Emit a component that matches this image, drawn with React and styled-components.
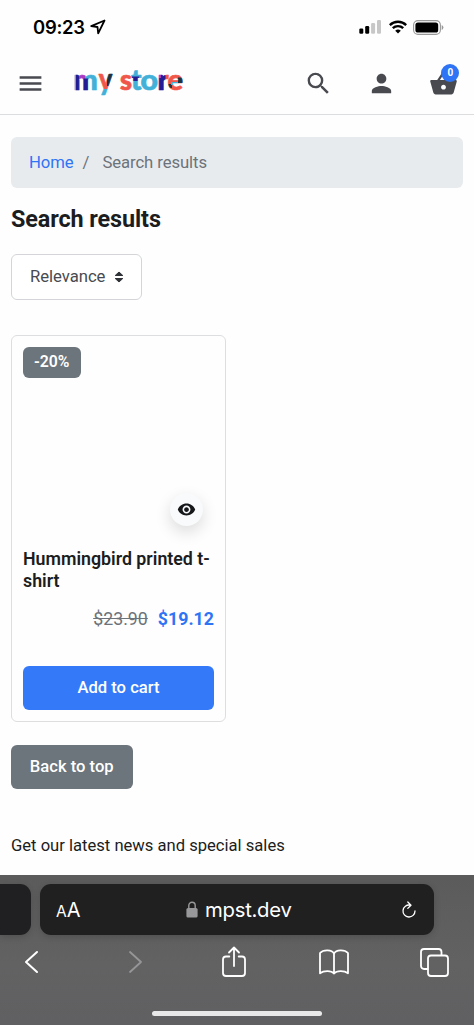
import React from 'react';
import styled, { createGlobalStyle } from 'styled-components';
import { MdMenu, MdSearch, MdPerson, MdShoppingBasket, MdRemoveRedEye } from 'react-icons/md';

const GlobalStyle = createGlobalStyle`
  *, *::before, *::after { box-sizing: border-box; }
  body { margin: 0; background: #fefefe; font-family: Roboto, "Liberation Sans", sans-serif; color: #1b1d20; }
  button { font-family: inherit; margin: 0; padding: 0; border: 0; background: none; color: inherit; }
  svg { display: block; flex: none; }
`;

const Screen = styled.div`
  width: 474px;
  height: 1025px;
  display: flex;
  flex-direction: column;
  overflow: hidden;
`;

const StatusBar = styled.div`
  height: 52px;
  flex: none;
  display: flex;
  justify-content: space-between;
  padding: 15px 30px 0 33px;
`;

const Clock = styled.div`
  display: flex;
  align-items: center;
  gap: 5px;
  height: 24px;
  font: 600 18.4px/24px Inter, sans-serif;
  letter-spacing: -0.25px;
  color: #000;
`;

const StatusIcons = styled.div`
  display: flex;
  align-items: center;
  gap: 6.5px;
  height: 24px;
`;

const Header = styled.header`
  height: 63px;
  flex: none;
  display: flex;
  align-items: center;
  padding: 0 0 0 16.4px;
  border-bottom: 1px solid #dcdddf;
  color: #484a50;
`;

const IconButton = styled.button`
  position: relative;
  display: flex;
  flex: none;
  width: 29px;
  height: 29px;
  margin-left: ${(p) => p.$gap || '0'};
`;

const Logo = styled.svg`
  margin-left: 19.6px;
  font-family: Lato, sans-serif;
  font-weight: 900;
`;

const CartCount = styled.span`
  position: absolute;
  left: 12.5px;
  top: -4.5px;
  width: 18px;
  height: 18px;
  border-radius: 50%;
  background: #2f74f5;
  color: #fff;
  font-size: 10px;
  font-weight: 700;
  line-height: 18px;
  text-align: center;
`;

const Main = styled.main`
  flex: 1;
  display: flex;
  flex-direction: column;
  align-items: flex-start;
  padding: 22px 11px 0;
`;

const Breadcrumb = styled.nav`
  align-self: stretch;
  height: 51px;
  display: flex;
  align-items: center;
  padding: 0 18px 1px;
  border-radius: 6px;
  background: #e8ebee;
  color: #6c737a;
  font-size: 16.7px;
  letter-spacing: -0.08px;
`;

const Crumb = styled.span`
  color: ${(p) => (p.$link ? '#2f74f5' : 'inherit')};
  margin-right: ${(p) => p.$space || '0'};
`;

const Heading = styled.h1`
  margin: 17px 0 0;
  font-size: 23.4px;
  line-height: 28px;
  font-weight: 700;
  letter-spacing: -0.1px;
`;

const SortSelect = styled.button`
  display: flex;
  align-items: center;
  gap: 8.5px;
  width: 131px;
  height: 46px;
  margin-top: 21px;
  padding: 0 0 1px 18px;
  border: 1px solid #d3d5d8;
  border-radius: 6px;
  background: #fff;
  color: #484a50;
  font-size: 16.7px;
  letter-spacing: -0.04px;
`;

const Card = styled.article`
  width: 215px;
  height: 387.5px;
  margin-top: 34.5px;
  padding: 11px;
  display: flex;
  flex-direction: column;
  border: 1px solid #dddee0;
  border-radius: 6px;
`;

const Thumbnail = styled.div`
  height: 191px;
  display: flex;
  flex-direction: column;
  justify-content: space-between;
  align-items: flex-start;
  padding-bottom: 10px;
`;

const Discount = styled.span`
  width: 57.5px;
  height: 31px;
  border-radius: 6px;
  background: #6c747c;
  color: #fff;
  font-size: 15.8px;
  font-weight: 600;
  line-height: 30px;
  text-align: center;
`;

const QuickView = styled.button`
  align-self: flex-end;
  display: flex;
  align-items: center;
  justify-content: center;
  width: 33px;
  height: 33px;
  margin-right: 11.5px;
  border-radius: 50%;
  background: #f9fafb;
  color: #15171a;
  box-shadow: 0 6px 16px rgba(0, 0, 0, 0.14);
`;

const ProductName = styled.h2`
  margin: 12px -2px 0 0;
  font-size: 17.8px;
  line-height: 22px;
  font-weight: 600;
`;

const Prices = styled.div`
  display: flex;
  justify-content: flex-end;
  gap: 10px;
  margin-top: 15px;
  font-size: 17.8px;
  line-height: 24px;
`;

const OldPrice = styled.span`
  color: #6c737a;
  text-decoration: line-through;
`;

const Price = styled.span`
  color: #2f74f5;
  font-weight: 700;
`;

const Button = styled.button`
  width: ${(p) => p.$width};
  height: 44.5px;
  flex: none;
  margin-top: ${(p) => p.$top};
  border-radius: 6px;
  background: ${(p) => (p.$primary ? '#347af8' : '#6c747c')};
  color: #fff;
  font-size: 16.6px;
  font-weight: 500;
`;

const Newsletter = styled.p`
  margin: 44.5px 0 0;
  font-size: 16.6px;
  line-height: 24px;
  white-space: nowrap;
`;

const Browser = styled.footer`
  height: 150px;
  flex: none;
  display: flex;
  flex-direction: column;
  align-items: center;
  padding-top: 9px;
  background: linear-gradient(#5b5b5b, #626263 60%, #606062);
  color: #fff;
`;

const TabStrip = styled.div`
  align-self: stretch;
  display: flex;
  gap: 9px;
  height: 51px;
`;

const PreviousTab = styled.div`
  width: 31px;
  border-radius: 0 11px 11px 0;
  background: #202022;
  box-shadow: 0 2px 7px rgba(0, 0, 0, 0.16);
`;

const AddressBar = styled.div`
  width: 394px;
  display: flex;
  align-items: center;
  padding: 0 17px 0 16px;
  border-radius: 11px;
  background: #202021;
  box-shadow: 0 2px 7px rgba(0, 0, 0, 0.16);
  font-family: Inter, sans-serif;
  font-size: 20.3px;
`;

const TextSize = styled.span`
  display: flex;
  align-items: baseline;
  width: 130px;
  padding-top: 2px;
  line-height: 26px;
`;

const Letter = styled.span`
  font-size: ${(p) => p.$size};
`;

const Address = styled.span`
  flex: 1;
  margin-left: 7px;
  letter-spacing: -0.25px;
`;

const Toolbar = styled.div`
  align-self: stretch;
  display: flex;
  align-items: center;
  height: 54px;
  padding-left: 24px;
`;

const ToolButton = styled.button`
  display: flex;
  flex: none;
  margin-left: ${(p) => p.$gap || '0'};
  color: ${(p) => (p.disabled ? '#969698' : '#fff')};
`;

const HomeIndicator = styled.div`
  width: 170px;
  height: 5px;
  margin-top: 22px;
  border-radius: 3px;
  background: #e9e9e9;
`;

const SKY = '#43b0d8';
const NAVY = '#241c92';
const RED = '#f0574b';
const INK = '#20303c';
const PLUM = '#a83cc0';

/* Each letter has a base colour and overlapping blocks [x, y, width, height, colour]. */
const letters = [
  { ch: 'm', x: 8.2, w: 24.5, base: SKY, blocks: [[11, 13, 4.5, 20, NAVY], [14, 12, 6, 6.5, PLUM], [18.3, 17.5, 5, 14, NAVY]] },
  { ch: 'y', x: 33.8, w: 13.5, size: 30, base: RED, blocks: [[42, 12, 8, 13, INK], [30, 28, 20, 14, SKY]] },
  { ch: 's', x: 55, w: 12, base: RED, blocks: [] },
  { ch: 't', x: 66, w: 10.5, base: SKY, blocks: [[67, 15.5, 7.2, 4.5, NAVY]] },
  { ch: 'o', x: 75.5, w: 17.5, base: SKY, blocks: [] },
  { ch: 'r', x: 92.5, w: 11, base: NAVY, blocks: [[92, 12, 4, 5, PLUM], [100.5, 12, 6, 12, RED]] },
  { ch: 'e', x: 102.5, w: 15.5, base: RED, blocks: [[113, 16.5, 5, 5.5, INK], [102, 23, 5, 4, INK], [106, 21, 7, 3, SKY]] },
];

function StoreLogo() {
  return (
    <Logo width="125" height="45" viewBox="0 0 125 45" role="img" aria-label="my store">
      <defs>
        {letters.map((l) => (
          <pattern key={l.ch} id={`ink-${l.ch}`} patternUnits="userSpaceOnUse" width="125" height="45">
            <rect width="125" height="45" fill={l.base} />
            {l.blocks.map(([x, y, w, h, fill]) => (
              <rect key={`${x}-${y}`} x={x} y={y} width={w} height={h} fill={fill} />
            ))}
          </pattern>
        ))}
      </defs>
      {letters.map((l) => (
        <text
          key={l.ch}
          x={l.x}
          y="28.8"
          fontSize={l.size || 28}
          fill={`url(#ink-${l.ch})`}
          stroke={`url(#ink-${l.ch})`}
          strokeWidth="0.7"
          strokeLinejoin="round"
          textLength={l.w}
          lengthAdjust="spacingAndGlyphs"
        >
          {l.ch}
        </text>
      ))}
    </Logo>
  );
}

const line = { fill: 'none', stroke: 'currentColor', strokeLinecap: 'round', strokeLinejoin: 'round' };

export default function App() {
  return (
    <Screen>
      <GlobalStyle />
      <StatusBar>
        <Clock>
          09:23
          <svg width="16" height="16" viewBox="0 0 16 16" {...line} strokeWidth="1.8">
            <path d="M14.500 1.500 1.200 7.200 7.500 8 8.200 14.300Z" />
          </svg>
        </Clock>
        <StatusIcons>
          <svg width="23" height="14" viewBox="0 0 23 14">
            <rect x="0.3" y="8.6" width="4" height="5.1" rx="1.2" fill="#000" />
            <rect x="6.2" y="6" width="4" height="7.7" rx="1.2" fill="#000" />
            <rect x="12.1" y="3" width="4" height="10.7" rx="1.2" fill="#c7c7c7" />
            <rect x="18" y="0" width="4" height="13.7" rx="1.2" fill="#c7c7c7" />
          </svg>
          <svg width="18" height="14" viewBox="0 0 18 14" fill="none" stroke="#000" strokeWidth="2.4">
            <path d="M.8 5.1a11.8 11.8 0 0 1 16.4 0" />
            <path d="M3.8 8.2a7.5 7.5 0 0 1 10.4 0" />
            <path d="M9 13.6 6.2 10.8a4 4 0 0 1 5.6 0Z" fill="#000" stroke="none" />
          </svg>
          <svg width="31" height="15" viewBox="0 0 31 15">
            <rect x="0.6" y="0.6" width="26.8" height="13.8" rx="4.4" fill="none" stroke="#999" strokeWidth="1.1" />
            <rect x="2.4" y="2.4" width="22.8" height="10.2" rx="2.6" fill="#000" />
            <path d="M28.7 5v5q1.7-.8 1.7-2.5T28.7 5Z" fill="#999" />
          </svg>
        </StatusIcons>
      </StatusBar>

      <Header>
        <IconButton aria-label="Menu"><MdMenu size={29} /></IconButton>
        <StoreLogo />
        <IconButton $gap="114.5px" aria-label="Search"><MdSearch size={29} /></IconButton>
        <IconButton $gap="33.3px" aria-label="Account"><MdPerson size={29} /></IconButton>
        <IconButton $gap="33.2px" aria-label="Cart">
          <MdShoppingBasket size={29} />
          <CartCount>0</CartCount>
        </IconButton>
      </Header>

      <Main>
        <Breadcrumb>
          <Crumb $link $space="9px">Home</Crumb>
          <Crumb $space="13px">/</Crumb>
          <Crumb>Search results</Crumb>
        </Breadcrumb>
        <Heading>Search results</Heading>
        <SortSelect>
          Relevance
          <svg width="10" height="12" viewBox="0 0 10 12" fill="#303338" stroke="#303338" strokeWidth="1" strokeLinejoin="round">
            <path d="M1.2 4.5 5 1l3.8 3.5ZM1.2 7.5 5 11l3.8-3.5Z" />
          </svg>
        </SortSelect>

        <Card>
          <Thumbnail>
            <Discount>-20%</Discount>
            <QuickView aria-label="Quick view"><MdRemoveRedEye size={19} /></QuickView>
          </Thumbnail>
          <ProductName>Hummingbird printed t-shirt</ProductName>
          <Prices>
            <OldPrice>$23.90</OldPrice>
            <Price>$19.12</Price>
          </Prices>
          <Button $primary $width="100%" $top="35px">Add to cart</Button>
        </Card>

        <Button $width="121.5px" $top="22.5px">Back to top</Button>
        <Newsletter>Get our latest news and special sales</Newsletter>
      </Main>

      <Browser>
        <TabStrip>
          <PreviousTab />
          <AddressBar>
            <TextSize><Letter $size="15.5px">A</Letter><Letter $size="20px">A</Letter></TextSize>
            <svg width="12" height="17" viewBox="0 0 12 17">
              <path d="M2.8 8V4.4a3.2 3.2 0 0 1 6.4 0V8" fill="none" stroke="#98989a" strokeWidth="1.4" />
              <rect x="0.4" y="7" width="11.2" height="9.6" rx="1.6" fill="#98989a" />
            </svg>
            <Address>mpst.dev</Address>
            <svg width="16" height="18" viewBox="0 0 16 18" {...line} strokeWidth="1.3">
              <path d="M9 4.1a6 6 0 1 0 5 5.9M6.8 1 10 4.2 6.8 7.4" />
            </svg>
          </AddressBar>
        </TabStrip>
        <Toolbar>
          <ToolButton aria-label="Back">
            <svg width="15" height="24" viewBox="0 0 15 24" {...line} strokeWidth="2"><path d="M13 2 2 12l11 10" /></svg>
          </ToolButton>
          <ToolButton $gap="89px" disabled aria-label="Forward">
            <svg width="15" height="24" viewBox="0 0 15 24" {...line} strokeWidth="1.8"><path d="m2 2 11 10L2 22" /></svg>
          </ToolButton>
          <ToolButton $gap="78px" aria-label="Share">
            <svg width="26" height="32" viewBox="0 0 26 32" {...line} strokeWidth="1.8">
              <path d="M8.300 10.500H5a3 3 0 0 0-3 3V27a3 3 0 0 0 3 3h16a3 3 0 0 0 3-3V13.500a3 3 0 0 0-3-3h-3.300M13 20V1.800M8 6.500l5-5 5 5" />
            </svg>
          </ToolButton>
          <ToolButton $gap="72px" aria-label="Bookmarks">
            <svg width="30" height="26" viewBox="0 0 30 26" {...line} strokeWidth="1.8">
              <path d="M15 4.500C13 .500 4.500.200 1 4V24.300C4.500 21.800 12 21.200 15 24.500 18 21.200 25.500 21.800 29 24.300V4C25.500.200 17 .500 15 4.500ZM15 4.500V24.500" />
            </svg>
          </ToolButton>
          <ToolButton $gap="71px" aria-label="Tabs">
            <svg width="29" height="29" viewBox="0 0 29 29" {...line} strokeWidth="1.8">
              <rect x="8" y="7.500" width="20" height="20.500" rx="3" />
              <path d="M7.500 21H4a3 3 0 0 1-3-3V4a3 3 0 0 1 3-3h14.500a3 3 0 0 1 3 3v3" />
            </svg>
          </ToolButton>
        </Toolbar>
        <HomeIndicator />
      </Browser>
    </Screen>
  );
}
